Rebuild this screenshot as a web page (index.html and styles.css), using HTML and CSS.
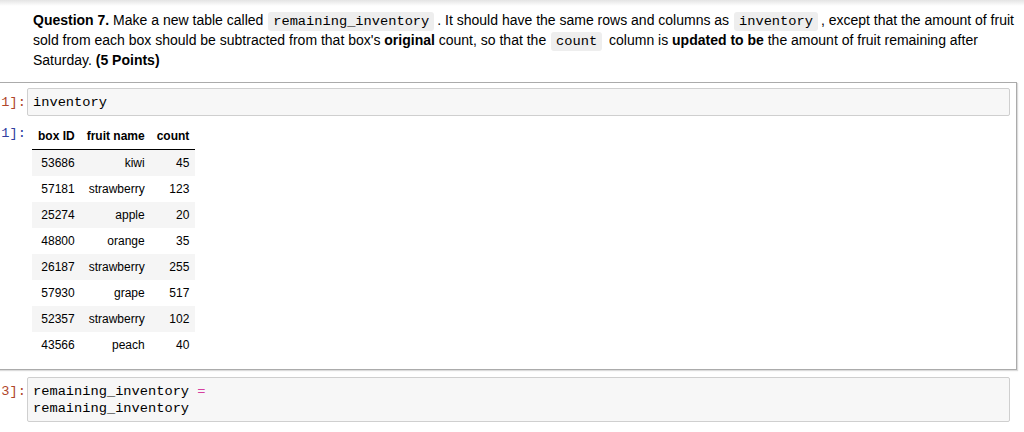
FILE: index.html
```html
<!DOCTYPE html>
<html>
<head>
<meta charset="utf-8">
<link rel="stylesheet" href="styles.css">
</head>
<body>
<div class="shade"></div>
<div class="md">
  <p><b>Question 7.</b> Make a new table called <code>remaining_inventory</code>. It should have the same rows and columns as <code>inventory</code>, except that the amount of fruit<br>sold from each box should be subtracted from that box's <b>original</b> count, so that the <code>count</code> column is <b>updated to be</b> the amount of fruit remaining after<br>Saturday. <b>(5 Points)</b></p>
</div>
<div class="cell selected">
  <div class="row">
    <div class="prompt in">1]:</div>
    <div class="input"><pre>inventory</pre></div>
  </div>
  <div class="row outrow">
    <div class="prompt out">1]:</div>
    <div class="output">
      <table class="df">
        <thead>
          <tr><th>box ID</th><th>fruit name</th><th>count</th></tr>
        </thead>
        <tbody>
          <tr><td>53686</td><td>kiwi</td><td>45</td></tr>
          <tr><td>57181</td><td>strawberry</td><td>123</td></tr>
          <tr><td>25274</td><td>apple</td><td>20</td></tr>
          <tr><td>48800</td><td>orange</td><td>35</td></tr>
          <tr><td>26187</td><td>strawberry</td><td>255</td></tr>
          <tr><td>57930</td><td>grape</td><td>517</td></tr>
          <tr><td>52357</td><td>strawberry</td><td>102</td></tr>
          <tr><td>43566</td><td>peach</td><td>40</td></tr>
        </tbody>
      </table>
    </div>
  </div>
</div>
<div class="cell plain">
  <div class="row">
    <div class="prompt in">3]:</div>
    <div class="input"><pre>remaining_inventory <span class="op">=</span>
remaining_inventory</pre></div>
  </div>
</div>
</body>
</html>
```
FILE: styles.css
```css
html, body {
  margin: 0;
  padding: 0;
  background: #fff;
  overflow: hidden;
}
body {
  font-family: "Liberation Sans", Arial, sans-serif;
  color: #000;
  width: 1024px;
  height: 432px;
}
.shade {
  height: 6px;
  background: linear-gradient(#e4e4e4, #ffffff);
}
.md {
  padding: 4px 0 0 33px;
  margin-bottom: 12px;
}
.md p {
  margin: 0;
  font-size: 14px;
  line-height: 20px;
  white-space: nowrap;
}
.md code {
  font-family: "Liberation Mono", "Courier New", monospace;
  font-size: 13.7px;
  line-height: 1;
  background: #eeeeee;
  border-radius: 3px;
  padding: 2px 5px;
  margin: 0 3px 0 1px;
  color: #000;
}
.cell {
  margin-left: -1px;
  width: 1018px;
  box-sizing: border-box;
  border: 1px solid transparent;
  padding-top: 5px;
}
.cell.selected {
  border-color: #ababab;
  border-left-color: transparent;
  box-shadow: 1px 1px 1px #dcdcdc;
}
.cell.plain {
  padding-top: 6px;
}
.row {
  display: flex;
}
.prompt {
  width: 27px;
  flex: none;
  box-sizing: border-box;
  text-align: right;
  padding-right: 1px;
  font-family: "Liberation Mono", "Courier New", monospace;
  font-size: 13.7px;
  line-height: 17px;
  white-space: nowrap;
}
.prompt.in {
  padding-top: 6px;
  color: #b0462a;
}
.prompt.out {
  padding-top: 2px;
  color: #303f9f;
}
.input {
  flex: 1;
  margin-right: 6px;
  background: #f7f7f7;
  border: 1px solid #cfcfcf;
  border-radius: 2px;
  padding: 5px 5px 4px;
}
.input pre {
  margin: 0;
  font-family: "Liberation Mono", "Courier New", monospace;
  font-size: 13.7px;
  line-height: 17px;
  color: #000;
}
.op {
  color: #d6409f;
}
.outrow {
  margin-top: 7px;
}
.output {
  padding: 0 0 11px 5px;
}
.df {
  border-collapse: collapse;
  border: none;
  font-size: 12px;
}
.df th, .df td {
  padding: 0 6px;
  height: 26px;
  line-height: 14px;
  text-align: right;
  vertical-align: middle;
  white-space: nowrap;
}
.df th {
  font-weight: bold;
  border-bottom: 1px solid #000;
}
.df tbody tr:nth-child(odd) {
  background: #f5f5f5;
}
```
